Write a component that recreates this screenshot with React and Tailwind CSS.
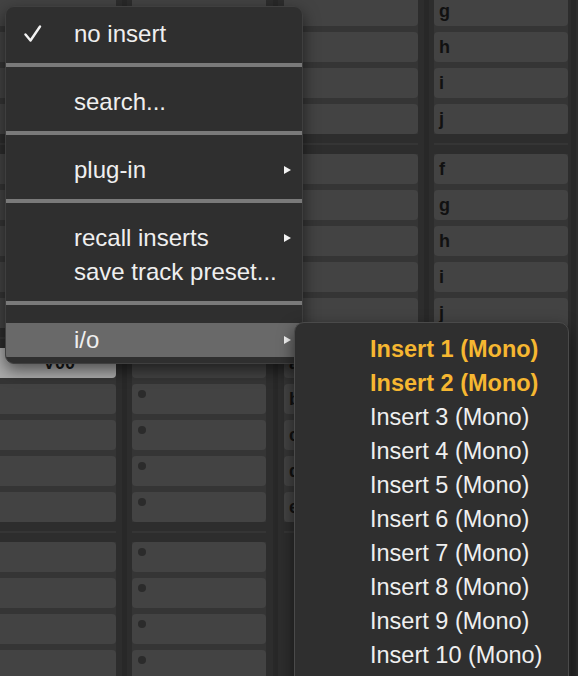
import React, { Fragment } from "react";

const FONT = "font-['Liberation_Sans',Arial,sans-serif]";

function Slot({ kind, label }) {
  if (kind === "v") {
    return (
      <div className="h-[30px] rounded-[4px] bg-[#ababab] flex items-center pl-[61px] text-[18px] font-bold text-[#1a1a1a]">
        V00
      </div>
    );
  }
  if (kind === "dot") {
    return (
      <div className="h-[30px] rounded-[4px] bg-[#434343] pl-[6px] pt-[6px]">
        <div className="w-[8px] h-[8px] rounded-full bg-[#2b2b2b]" />
      </div>
    );
  }
  if (kind === "letter") {
    return (
      <div className="h-[30px] rounded-[4px] bg-[#434343] flex items-center pl-[5px] text-[18px] font-bold text-[#111111]">
        {label}
      </div>
    );
  }
  return <div className="h-[30px] rounded-[4px] bg-[#434343]" />;
}

function Column({ groups }) {
  return (
    <div className="flex flex-col w-[134px] shrink-0">
      {groups.map((g, i) => (
        <Fragment key={i}>
          {i > 0 && (
            <div className="h-[20px] flex flex-col justify-center">
              <div className="h-[2px] bg-[#353535]" />
            </div>
          )}
          {g ? (
            <div className="flex flex-col gap-[6px] bg-[#353535]">
              {g.map((c, j) => (
                <Slot key={j} {...c} />
              ))}
            </div>
          ) : (
            <div className="h-[174px]" />
          )}
        </Fragment>
      ))}
    </div>
  );
}

function Gutter({ w }) {
  return (
    <div className={`${w} shrink-0 flex justify-center`}>
      <div className="w-[5px] bg-[#282828]" />
    </div>
  );
}

const empty = () => Array.from({ length: 5 }, () => ({}));
const dots = () => Array.from({ length: 5 }, () => ({ kind: "dot" }));
const letters = (s) => s.split("").map((l) => ({ kind: "letter", label: l }));

function Arrow() {
  return (
    <svg width="7" height="8" viewBox="0 0 7 8" className="shrink-0">
      <path d="M0 0 L7 4 L0 8 Z" fill="#f2f2f2" />
    </svg>
  );
}

function Item({ children, check, arrow, active }) {
  return (
    <div
      className={`h-[34px] flex items-center relative pl-[68px] pr-[11px] ${
        active ? "bg-[#696969]" : ""
      }`}
    >
      {check && (
        <svg
          width="18"
          height="18"
          viewBox="0 0 18 18"
          className="absolute left-[18px] top-[8px]"
        >
          <path
            d="M1.5 9.5 L6.5 15.5 L16 1.5"
            fill="none"
            stroke="#f2f2f2"
            strokeWidth="2.4"
            strokeLinecap="round"
            strokeLinejoin="round"
          />
        </svg>
      )}
      <span className="flex-1">{children}</span>
      {arrow && <Arrow />}
    </div>
  );
}

function Sep() {
  return (
    <div className="h-[34px] pt-[12px]">
      <div className="h-[4px] bg-[#7a7a7a]" />
    </div>
  );
}

export default function App() {
  const subItems = Array.from({ length: 10 }, (_, i) => i + 1);
  return (
    <div
      className={`relative w-[578px] h-[676px] overflow-hidden bg-[#2d2d2d] ${FONT}`}
    >
      <div className="flex ml-[-18px] mt-[-40px]">
        <Column
          groups={[empty(), empty(), [{ kind: "v" }, ...empty().slice(1)], empty()]}
        />
        <Gutter w="w-[16px]" />
        <Column groups={[empty(), empty(), dots(), dots()]} />
        <Gutter w="w-[18px]" />
        <Column groups={[empty(), empty(), letters("abcde"), null]} />
        <Gutter w="w-[16px]" />
        <Column
          groups={[
            [{}, ...letters("ghij")],
            letters("fghij"),
            empty(),
            empty(),
          ]}
        />
        <Gutter w="w-[10px]" />
      </div>

      {/* main popup menu */}
      <div className="absolute left-[5px] top-[6px] w-[298px] h-[358px] rounded-[9px] bg-[#2f2f2f] border border-[#3f3f3f] shadow-[0_6px_16px_rgba(0,0,0,0.55)] pt-[10px] text-[24px] text-[#efefef] overflow-hidden">
        <Item check>no insert</Item>
        <Sep />
        <Item>search...</Item>
        <Sep />
        <Item arrow>plug-in</Item>
        <Sep />
        <Item arrow>recall inserts</Item>
        <Item>save track preset...</Item>
        <Sep />
        <Item arrow active>
          i/o
        </Item>
      </div>

      {/* submenu */}
      <div className="absolute left-[294px] top-[322px] w-[275px] h-[400px] rounded-[10px] bg-[#2f2f2f] border border-[#4a4a4a] shadow-[0_6px_16px_rgba(0,0,0,0.55)] pt-[10px] text-[23.5px]">
        {subItems.map((n) => (
          <div
            key={n}
            className={`h-[34px] flex items-center pl-[75px] ${
              n <= 2 ? "font-bold text-[#f6b731]" : "text-[#efefef]"
            }`}
          >
            Insert {n} (Mono)
          </div>
        ))}
      </div>
    </div>
  );
}
